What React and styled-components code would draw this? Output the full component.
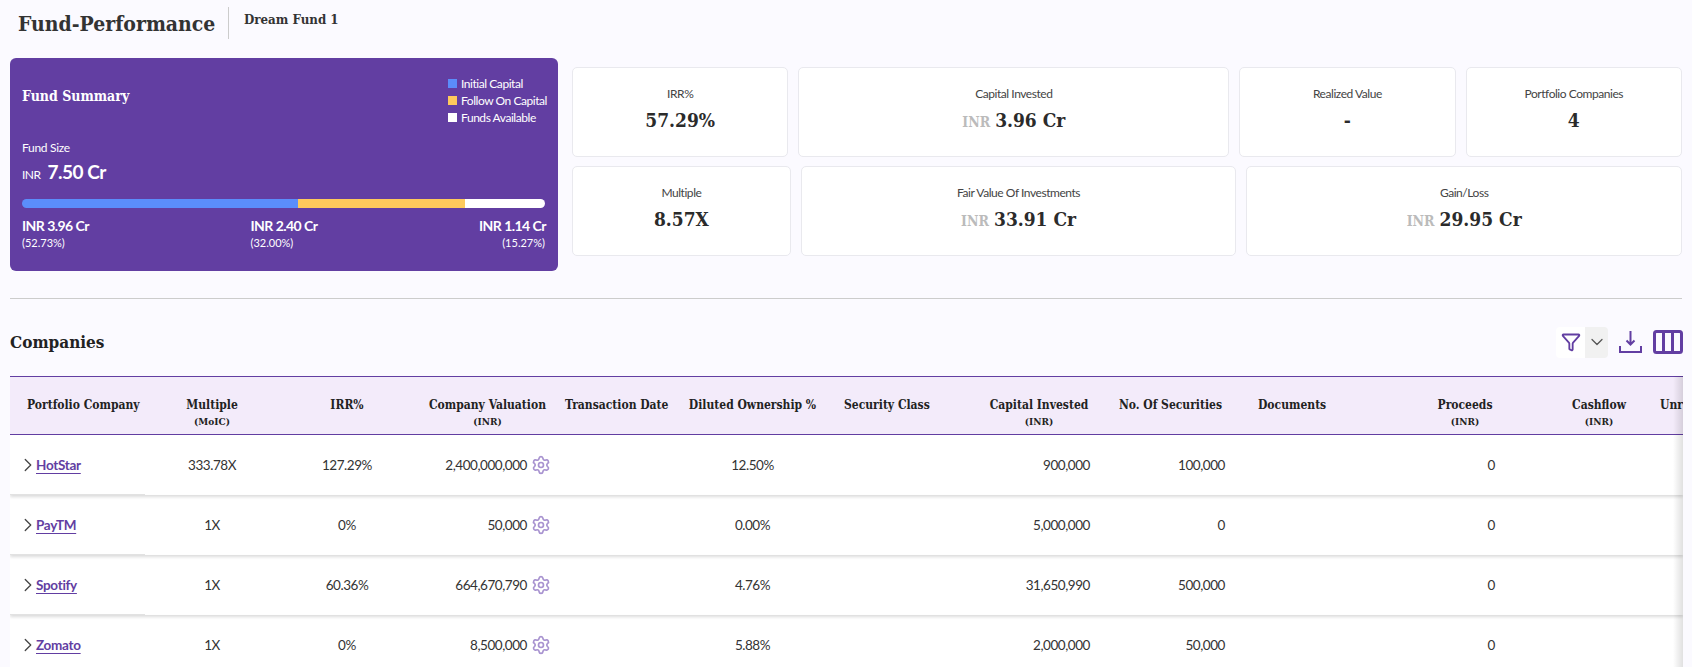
import React from 'react';
import styled, { createGlobalStyle } from 'styled-components';
import { ChevronRight, ChevronDown, Funnel, Settings } from 'lucide-react';

const PURPLE = '#623ea2';
const SLAB = '"DejaVu Serif Condensed", "DejaVu Serif", serif';
const COLUMNS = '135px 134px 136px 145px 115px 155px 158px 102px 135px 210px 60px 148px 240px';

const GlobalStyle = createGlobalStyle`
  html, body {
    margin: 0;
    height: 667px;
    overflow: hidden;
    background: #fbfaff;
    font-family: Lato, "Liberation Sans", sans-serif;
    color: #333;
  }
`;

const Page = styled.div`
  width: 1692px;
  height: 667px;
  padding: 7px 10px 0;
  box-sizing: border-box;
  overflow: hidden;
`;

const Header = styled.header`
  display: flex;
  align-items: flex-start;
  height: 32px;
  padding-left: 8px;
`;

const Title = styled.h1`
  margin: 0 15px 0 0;
  width: 210px;
  height: 32px;
  font: 600 21px/33px ${SLAB};
  color: #333;
  white-space: nowrap;
  border-right: 1px solid #ccc;
`;

const SubTitle = styled.span`
  font: 600 13.200px/25px ${SLAB};
  color: #333;
`;

const Top = styled.section`
  display: flex;
  gap: 14px;
  margin-top: 19px;
`;

const SummaryCard = styled.div`
  width: 548px;
  height: 213px;
  box-sizing: border-box;
  background: ${PURPLE};
  border-radius: 6px;
  padding: 17px 13px 0 12px;
  color: #fff;
`;

const SummaryHead = styled.div`
  display: flex;
  justify-content: space-between;
  align-items: flex-start;
  height: 51px;
`;

const SummaryTitle = styled.div`
  margin-top: 13px;
  font: 700 14px/17px ${SLAB};
`;

const Legend = styled.ul`
  list-style: none;
  margin: 0;
  padding: 0;
  width: 97px;
`;

const LegendItem = styled.li`
  display: flex;
  align-items: center;
  gap: 4px;
  height: 17px;
  font-size: 12px;
  letter-spacing: -0.45px;
  white-space: nowrap;
`;

const Swatch = styled.i`
  flex: none;
  width: 9px;
  height: 9px;
  background: ${p => p.$color};
`;

const FundLabel = styled.div`
  margin-top: 14px;
  font-size: 12px;
  letter-spacing: -0.3px;
  line-height: 16px;
`;

const FundValue = styled.div`
  display: flex;
  align-items: baseline;
  gap: 7px;
  font: 700 19px/26px Lato, sans-serif;
  letter-spacing: -0.5px;
  margin-top: 3px;
`;

const FundUnit = styled.span`
  font-size: 12px;
  font-weight: 400;
`;

const Bar = styled.div`
  display: flex;
  height: 9px;
  margin-top: 11px;
  border-radius: 5px;
  overflow: hidden;
`;

const BarPart = styled.div`
  background: ${p => p.$color};
`;

const BarLabels = styled.div`
  display: flex;
  justify-content: space-between;
  margin-top: 9px;
`;

const BarLabel = styled.div`
  width: 66px;
  text-align: ${p => p.$align || 'left'};
  font: 700 14px/18px Lato, sans-serif;
  letter-spacing: -0.55px;
  white-space: nowrap;
`;

const BarPercent = styled.div`
  font-size: 11px;
  font-weight: 400;
  line-height: 16px;
  letter-spacing: 0;
`;

const Stats = styled.div`
  flex: 1;
  display: flex;
  flex-direction: column;
  gap: 9px;
  margin-top: 9px;
`;

const StatRow = styled.div`
  display: flex;
  gap: 10px;
`;

const StatCard = styled.div`
  flex: ${p => p.$span || 1} 1 0;
  height: 90px;
  box-sizing: border-box;
  background: #fff;
  border: 1px solid #e9e9ee;
  border-radius: 5px;
  text-align: center;
  padding-top: 18px;
`;

const StatLabel = styled.div`
  font-size: 12px;
  letter-spacing: -0.45px;
  line-height: 16px;
  color: #444;
`;

const StatValue = styled.div`
  font: 700 19px/30px ${SLAB};
  color: #2b2b2b;
  margin-top: 3px;
`;

const StatUnit = styled.span`
  font-size: 14px;
  font-weight: 600;
  color: #bbb;
  margin-right: 5px;
`;

const Rule = styled.hr`
  border: 0;
  border-top: 1px solid #ccc;
  margin: 27px 0 0;
`;

const Toolbar = styled.div`
  display: flex;
  align-items: center;
  height: 30px;
  margin-top: 28px;
  margin-right: -1px;
`;

const SectionTitle = styled.h2`
  flex: 1;
  margin: 0;
  font: 600 17px ${SLAB};
  color: #222;
`;

const FilterGroup = styled.div`
  display: flex;
  width: 52px;
  height: 31px;
  border-radius: 4px;
  overflow: hidden;
  margin-right: 11px;
`;

const FilterButton = styled.div`
  flex: ${p => (p.$grey ? '0 0 23px' : 1)};
  display: flex;
  align-items: center;
  justify-content: center;
  background: ${p => (p.$grey ? '#f1f1f1' : '#fff')};
  color: ${p => (p.$grey ? '#555' : PURPLE)};
`;

const DownloadIcon = styled.svg`
  display: block;
  color: ${PURPLE};
`;

const ColumnsIcon = styled.svg`
  display: block;
  margin-left: 11px;
  color: ${PURPLE};
`;

const TableWrap = styled.div`
  position: relative;
  width: 1673px;
  margin-top: 19px;
  overflow: hidden;
  background: #fff;
  height: 300px;
  &::after {
    content: '';
    position: absolute;
    top: 0;
    right: 0;
    bottom: 0;
    width: 10px;
    background: linear-gradient(to right, rgba(0, 0, 0, 0), rgba(0, 0, 0, 0.12));
  }
`;

const HeadRow = styled.div`
  display: grid;
  grid-template-columns: ${COLUMNS};
  height: 59px;
  box-sizing: border-box;
  background: #f3ebfa;
  border-top: 1px solid ${PURPLE};
  border-bottom: 1px solid ${PURPLE};
`;

const HeadCell = styled.div`
  display: flex;
  flex-direction: column;
  justify-content: center;
  align-items: ${p => p.$align || 'center'};
  padding: ${p => p.$pad || 0};
  padding-top: ${p => (p.$twoLine ? '15px' : 0)};
  font: 600 12px/17px ${SLAB};
  color: #222;
  white-space: nowrap;
`;

const HeadSub = styled.span`
  font-size: 10px;
  line-height: 15px;
`;

const BodyRow = styled.div`
  display: grid;
  grid-template-columns: ${COLUMNS};
  height: 60px;
  box-sizing: border-box;
  box-shadow: 0 2px 3px rgba(0, 0, 0, 0.14);
`;

const Cell = styled.div`
  display: flex;
  align-items: center;
  justify-content: ${p => p.$align || 'center'};
  padding: ${p => p.$pad || 0};
  font-size: 13.500px;
  letter-spacing: -0.45px;
  color: #333;
  white-space: nowrap;
`;

const NameCell = styled(Cell)`
  justify-content: flex-start;
  gap: 5px;
  padding-left: 7px;
  border-bottom: 1px solid #e2e2e2;
`;

const Chevron = styled(ChevronRight)`
  flex: none;
  margin-right: -8px;
  color: #444;
`;

const CompanyLink = styled.a`
  color: ${PURPLE};
  font-weight: 700;
  font-size: 13.500px;
  letter-spacing: -0.3px;
  text-decoration: underline;
  text-underline-offset: 3px;
`;

const Gear = styled(Settings)`
  flex: none;
  margin-left: 4px;
  color: #a893d0;
`;

const companies = [
  { name: 'HotStar', multiple: '333.78X', irr: '127.29%', valuation: '2,400,000,000', ownership: '12.50%', capital: '900,000', securities: '100,000' },
  { name: 'PayTM', multiple: '1X', irr: '0%', valuation: '50,000', ownership: '0.00%', capital: '5,000,000', securities: '0' },
  { name: 'Spotify', multiple: '1X', irr: '60.36%', valuation: '664,670,790', ownership: '4.76%', capital: '31,650,990', securities: '500,000' },
  { name: 'Zomato', multiple: '1X', irr: '0%', valuation: '8,500,000', ownership: '5.88%', capital: '2,000,000', securities: '50,000' },
];

function Stat({ label, unit, value, span }) {
  return (
    <StatCard $span={span}>
      <StatLabel>{label}</StatLabel>
      <StatValue>
        {unit && <StatUnit>{unit}</StatUnit>}
        {value}
      </StatValue>
    </StatCard>
  );
}

export default function App() {
  return (
    <Page>
      <GlobalStyle />
      <Header>
        <Title>Fund-Performance</Title>
        <SubTitle>Dream Fund 1</SubTitle>
      </Header>

      <Top>
        <SummaryCard>
          <SummaryHead>
            <SummaryTitle>Fund Summary</SummaryTitle>
            <Legend>
              <LegendItem><Swatch $color="#5b8dfb" />Initial Capital</LegendItem>
              <LegendItem><Swatch $color="#fec95c" />Follow On Capital</LegendItem>
              <LegendItem><Swatch $color="#fff" />Funds Available</LegendItem>
            </Legend>
          </SummaryHead>
          <FundLabel>Fund Size</FundLabel>
          <FundValue><FundUnit>INR</FundUnit>7.50 Cr</FundValue>
          <Bar>
            <BarPart $color="#5b8dfb" style={{ width: '52.73%' }} />
            <BarPart $color="#fec95c" style={{ width: '32%' }} />
            <BarPart $color="#fff" style={{ width: '15.27%' }} />
          </Bar>
          <BarLabels>
            <BarLabel>INR 3.96 Cr<BarPercent>(52.73%)</BarPercent></BarLabel>
            <BarLabel>INR 2.40 Cr<BarPercent>(32.00%)</BarPercent></BarLabel>
            <BarLabel $align="right">INR 1.14 Cr<BarPercent>(15.27%)</BarPercent></BarLabel>
          </BarLabels>
        </SummaryCard>

        <Stats>
          <StatRow>
            <Stat label="IRR%" value="57.29%" />
            <Stat label="Capital Invested" unit="INR" value="3.96 Cr" span={2} />
            <Stat label="Realized Value" value="-" />
            <Stat label="Portfolio Companies" value="4" />
          </StatRow>
          <StatRow>
            <Stat label="Multiple" value="8.57X" />
            <Stat label="Fair Value Of Investments" unit="INR" value="33.91 Cr" span={2} />
            <Stat label="Gain/Loss" unit="INR" value="29.95 Cr" span={2} />
          </StatRow>
        </Stats>
      </Top>

      <Rule />

      <Toolbar>
        <SectionTitle>Companies</SectionTitle>
        <FilterGroup>
          <FilterButton><Funnel size={20} strokeWidth={2.2} /></FilterButton>
          <FilterButton $grey><ChevronDown size={20} strokeWidth={1.5} /></FilterButton>
        </FilterGroup>
        <DownloadIcon width="23" height="22" viewBox="0 0 23 22" fill="none" stroke="currentColor" strokeWidth="2">
          <path d="M11.500 0v13M7.500 9.500l4 4 4-4M1 15v6h21v-6" />
        </DownloadIcon>
        <ColumnsIcon width="30" height="24" viewBox="0 0 30 24" fill="none" stroke="currentColor" strokeWidth="3">
          <rect x="1.500" y="1.500" width="27" height="21" rx="2" />
          <path d="M10.500 1.500v21M19.500 1.500v21" />
        </ColumnsIcon>
      </Toolbar>

      <TableWrap>
        <HeadRow>
          <HeadCell $align="flex-start" $pad="0 0 0 17px">Portfolio Company</HeadCell>
          <HeadCell $twoLine>Multiple<HeadSub>(MoIC)</HeadSub></HeadCell>
          <HeadCell>IRR%</HeadCell>
          <HeadCell $twoLine>Company Valuation<HeadSub>(INR)</HeadSub></HeadCell>
          <HeadCell $align="flex-start" $pad="0 0 0 5px">Transaction Date</HeadCell>
          <HeadCell>Diluted Ownership %</HeadCell>
          <HeadCell $align="flex-start" $pad="0 0 0 14px">Security Class</HeadCell>
          <HeadCell $twoLine>Capital Invested<HeadSub>(INR)</HeadSub></HeadCell>
          <HeadCell $align="flex-end" $pad="0 3px 0 0">No. Of Securities</HeadCell>
          <HeadCell $align="flex-start" $pad="0 0 0 33px">Documents</HeadCell>
          <HeadCell $twoLine>Proceeds<HeadSub>(INR)</HeadSub></HeadCell>
          <HeadCell $twoLine $pad="0 0 0 60px">Cashflow<HeadSub>(INR)</HeadSub></HeadCell>
          <HeadCell $align="flex-start" $pad="0 0 0 17px">Unrealized Gain/Loss</HeadCell>
        </HeadRow>
        {companies.map(c => (
          <BodyRow key={c.name}>
            <NameCell>
              <Chevron size={22} strokeWidth={1.4} />
              <CompanyLink>{c.name}</CompanyLink>
            </NameCell>
            <Cell>{c.multiple}</Cell>
            <Cell>{c.irr}</Cell>
            <Cell $align="flex-end" $pad="0 9px 0 0">{c.valuation}<Gear size={20} strokeWidth={2} /></Cell>
            <Cell />
            <Cell>{c.ownership}</Cell>
            <Cell />
            <Cell $align="flex-end">{c.capital}</Cell>
            <Cell $align="flex-end">{c.securities}</Cell>
            <Cell />
            <Cell $align="flex-end">0</Cell>
            <Cell />
            <Cell />
          </BodyRow>
        ))}
      </TableWrap>
    </Page>
  );
}
